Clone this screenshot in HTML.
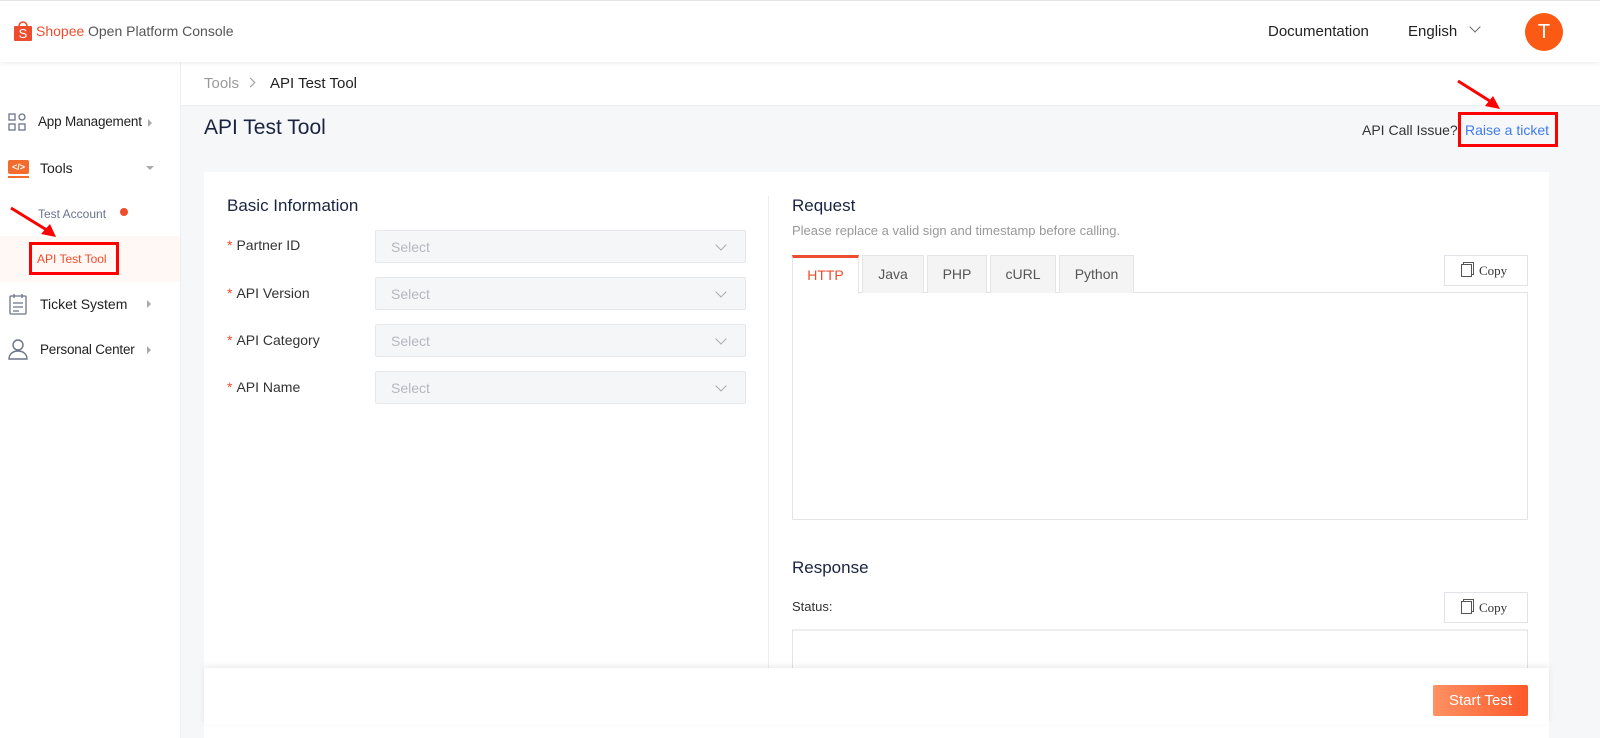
<!DOCTYPE html>
<html><head><meta charset="utf-8"><style>
*{box-sizing:border-box;margin:0;padding:0}
body{width:1600px;height:738px;overflow:hidden;background:#f6f7f9;font-family:"Liberation Sans",Arial,sans-serif;position:relative;color:#333}
.abs{position:absolute}
.hdr{left:0;top:0;width:1600px;height:62px;background:#fff;box-shadow:0 2px 4px rgba(0,0,0,.06);z-index:3;border-top:1px solid #e5e5e5}
.side{left:0;top:62px;width:181px;height:676px;background:#fff;border-right:1px solid #eceef2}
.bc{left:181px;top:62px;width:1419px;height:44px;background:#fff;border-bottom:1px solid #eceef2}
.card{left:204px;top:172px;width:1345px;height:566px;background:#fff}
.lbl{font-size:14px;color:#333}
.lbl b{color:#ee4d2d;font-weight:normal;margin-right:4px}
.sel{width:371px;height:33px;border:1px solid #e5e7eb;background:#f5f6f8;border-radius:2px;font-size:14px;color:#b5b8c0;padding:8px 15px}
.sel:after{content:"";position:absolute;right:20px;top:10px;width:7px;height:7px;border-right:1px solid #aaa;border-bottom:1px solid #aaa;transform:rotate(45deg)}
.tab{top:255px;height:38px;background:#f4f4f5;border:1px solid #e4e4e6;border-bottom:none;font-size:14px;color:#555;text-align:center;line-height:36px}
.copy{width:84px;height:31px;border:1px solid #e1e3e8;background:#fff;font-size:13px;font-family:"Liberation Serif",serif;color:#333;padding:7px 0 0 16px}
.copy i{display:inline-block;width:11px;height:13px;border:1px solid #555;margin-right:7px;vertical-align:-2px;box-shadow:2px -2px 0 -1px #fff,2px -2px 0 0 #555}
</style></head><body>
<div class="abs hdr">
 <svg class="abs" style="left:13px;top:19px" width="20" height="22" viewBox="0 0 20 22"><path d="M6 6a4 4 0 0 1 8 0" fill="none" stroke="#ee4d2d" stroke-width="1.6"/><rect x="1" y="6" width="18" height="15" rx="1" fill="#ee4d2d"/><text x="10" y="18" font-size="13" fill="#fff" text-anchor="middle" font-family="Liberation Sans">S</text></svg>
 <span class="abs" style="left:36px;top:22px;font-size:14px;color:#ee4d2d">Shopee</span>
 <span class="abs" style="left:88px;top:22px;font-size:14px;color:#555">Open Platform Console</span>
 <span class="abs" style="left:1268px;top:22px;font-size:15px;color:#222">Documentation</span>
 <span class="abs" style="left:1408px;top:22px;font-size:15px;color:#222">English</span>
 <span class="abs" style="left:1471px;top:22px;width:8px;height:8px;border-right:1.5px solid #666;border-bottom:1.5px solid #666;transform:rotate(45deg)"></span>
 <div class="abs" style="left:1525px;top:12px;width:38px;height:38px;border-radius:50%;background:#fa5a14;color:#fff;font-size:20px;text-align:center;line-height:38px">T</div>
</div>
<div class="abs side">
 <svg class="abs" style="left:8px;top:51px" width="19" height="19" viewBox="0 0 19 19" fill="none" stroke="#6b7388" stroke-width="1.3"><rect x="1" y="1" width="6" height="6"/><circle cx="14" cy="4" r="3"/><rect x="1" y="11" width="6" height="6"/><rect x="11" y="11" width="6" height="6"/></svg>
 <span class="abs" style="left:38px;top:52px;font-size:13.5px;color:#222;letter-spacing:-0.2px">App Management</span>
 <span class="abs" style="left:148px;top:57px;border-left:4px solid #aaa;border-top:4px solid transparent;border-bottom:4px solid transparent"></span>
 <div class="abs" style="left:8px;top:98px;width:21px;height:14px;background:#f46b2e;border-radius:2px;color:#fff;font-size:9px;text-align:center;line-height:14px;font-weight:bold">&lt;/&gt;</div>
 <div class="abs" style="left:8px;top:114px;width:21px;height:2px;background:#f46b2e"></div>
 <span class="abs" style="left:40px;top:98px;font-size:14px;color:#222">Tools</span>
 <span class="abs" style="left:146px;top:104px;border-top:4px solid #aaa;border-left:4px solid transparent;border-right:4px solid transparent"></span>
 <span class="abs" style="left:38px;top:145px;font-size:12px;color:#6b7388">Test Account</span>
 <div class="abs" style="left:120px;top:146px;width:8px;height:8px;border-radius:50%;background:#ee4d2d"></div>
 <div class="abs" style="left:0;top:174px;width:180px;height:46px;background:#fff8f5"></div>
 <div class="abs" style="left:29px;top:180px;width:90px;height:33px;border:3px solid #f00"></div>
 <span class="abs" style="left:37px;top:190px;font-size:12px;color:#ee4d2d">API Test Tool</span>
 <svg class="abs" style="left:8px;top:142px" width="52" height="38"><line x1="3" y1="4" x2="42" y2="28" stroke="#f00" stroke-width="3"/><path d="M48 33 L33 30 L42 20Z" fill="#f00"/></svg>
 <svg class="abs" style="left:9px;top:231px" width="18" height="22" viewBox="0 0 18 22" fill="none" stroke="#6b7388" stroke-width="1.3"><rect x="1" y="3" width="16" height="18" rx="1"/><path d="M5 1v4M13 1v4M4 10h10M4 14h10M4 18h6"/></svg>
 <span class="abs" style="left:40px;top:234px;font-size:14px;color:#222">Ticket System</span>
 <span class="abs" style="left:147px;top:238px;border-left:4px solid #aaa;border-top:4px solid transparent;border-bottom:4px solid transparent"></span>
 <svg class="abs" style="left:8px;top:276px" width="20" height="22" viewBox="0 0 20 22" fill="none" stroke="#6b7388" stroke-width="1.4"><circle cx="10" cy="7" r="5"/><path d="M1 21c0-5 4-8 9-8s9 3 9 8z"/></svg>
 <span class="abs" style="left:40px;top:280px;font-size:13.5px;color:#222;letter-spacing:-0.2px">Personal Center</span>
 <span class="abs" style="left:147px;top:284px;border-left:4px solid #aaa;border-top:4px solid transparent;border-bottom:4px solid transparent"></span>
</div>
<div class="abs bc">
 <span class="abs" style="left:23px;top:13px;font-size:15px;color:#999">Tools</span>
 <span class="abs" style="left:66px;top:17px;width:7px;height:7px;border-right:1px solid #999;border-top:1px solid #999;transform:rotate(45deg)"></span>
 <span class="abs" style="left:89px;top:13px;font-size:15px;color:#222">API Test Tool</span>
</div>
<span class="abs" style="left:204px;top:116px;font-size:21px;color:#1a2440">API Test Tool</span>
<span class="abs" style="left:1362px;top:122px;font-size:14px;color:#333">API Call Issue?</span>
<span class="abs" style="left:1465px;top:122px;font-size:14px;color:#3f7bf0">Raise a ticket</span>
<div class="abs" style="left:1458px;top:112px;width:100px;height:35px;border:3px solid #f00"></div>
<svg class="abs" style="left:1455px;top:78px" width="50" height="36"><line x1="3" y1="3" x2="38" y2="25" stroke="#f00" stroke-width="3"/><path d="M45 31 L30 28 L38 18Z" fill="#f00"/></svg>
<div class="abs card"></div>
<span class="abs" style="left:227px;top:196px;font-size:17px;color:#1a2440">Basic Information</span>
<span class="abs lbl" style="left:227px;top:237px"><b>*</b>Partner ID</span>
<span class="abs lbl" style="left:227px;top:285px"><b>*</b>API Version</span>
<span class="abs lbl" style="left:227px;top:332px"><b>*</b>API Category</span>
<span class="abs lbl" style="left:227px;top:379px"><b>*</b>API Name</span>
<div class="abs sel" style="left:375px;top:230px">Select</div>
<div class="abs sel" style="left:375px;top:277px">Select</div>
<div class="abs sel" style="left:375px;top:324px">Select</div>
<div class="abs sel" style="left:375px;top:371px">Select</div>
<div class="abs" style="left:768px;top:196px;width:1px;height:480px;background:#eceef2"></div>
<span class="abs" style="left:792px;top:196px;font-size:17px;color:#1a2440">Request</span>
<span class="abs" style="left:792px;top:223px;font-size:13px;color:#999">Please replace a valid sign and timestamp before calling.</span>
<div class="abs" style="left:792px;top:292px;width:736px;height:228px;border:1px solid #e4e4e6"></div>
<div class="abs tab" style="left:792px;width:67px;height:39px;background:#fff;border-top:3px solid #ee4d2d;color:#ee4d2d;line-height:34px">HTTP</div>
<div class="abs tab" style="left:862px;width:62px">Java</div>
<div class="abs tab" style="left:927px;width:60px">PHP</div>
<div class="abs tab" style="left:990px;width:66px">cURL</div>
<div class="abs tab" style="left:1059px;width:75px">Python</div>
<div class="abs copy" style="left:1444px;top:255px"><i></i>Copy</div>
<span class="abs" style="left:792px;top:558px;font-size:17px;color:#1a2440">Response</span>
<span class="abs" style="left:792px;top:599px;font-size:13px;color:#333">Status:</span>
<div class="abs copy" style="left:1444px;top:592px"><i></i>Copy</div>
<div class="abs" style="left:792px;top:629px;width:736px;height:60px;border:1px solid #e4e4e6;border-top:2px solid #eee"></div>
<div class="abs" style="left:204px;top:668px;width:1345px;height:56px;background:#fff;box-shadow:0 -2px 6px rgba(0,0,0,.08)"></div>
<div class="abs" style="left:1433px;top:685px;width:95px;height:31px;background:linear-gradient(90deg,#ff9162,#fd5a2a);color:#fff;font-size:15px;text-align:center;line-height:31px;border-radius:2px">Start Test</div>
</body></html>
